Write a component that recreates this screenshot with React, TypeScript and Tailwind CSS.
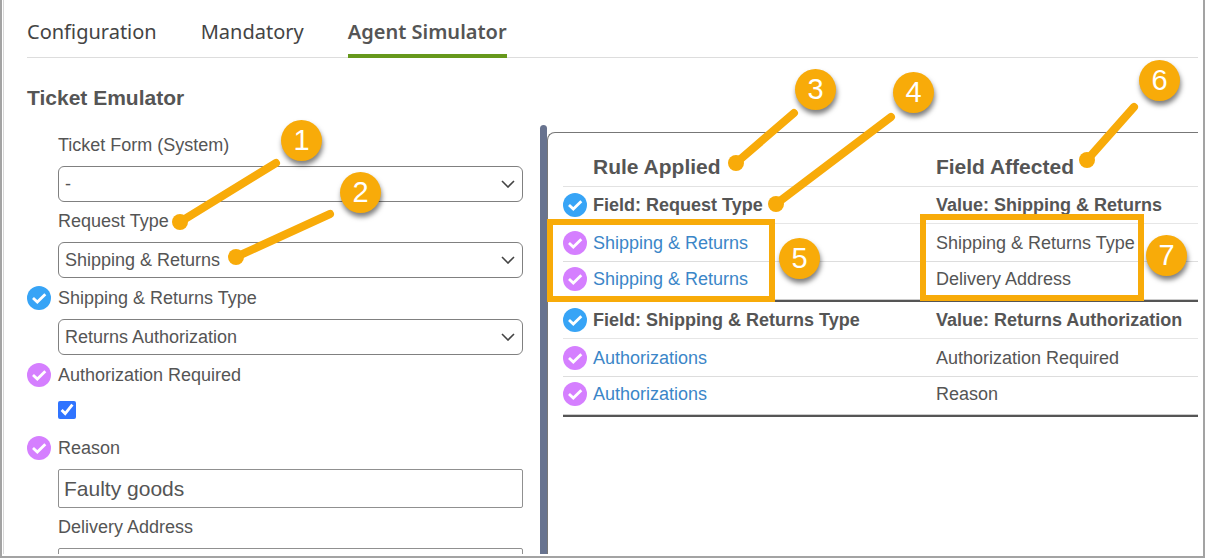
import { useState } from "react";
import type { ReactNode } from "react";

type Tone = "blue" | "purple";

const tabs = ["Configuration", "Mandatory", "Agent Simulator"];

const groups = [
  {
    field: "Field: Request Type",
    value: "Value: Shipping & Returns",
    rules: [
      { name: "Shipping & Returns", affected: "Shipping & Returns Type" },
      { name: "Shipping & Returns", affected: "Delivery Address" },
    ],
  },
  {
    field: "Field: Shipping & Returns Type",
    value: "Value: Returns Authorization",
    rules: [
      { name: "Authorizations", affected: "Authorization Required" },
      { name: "Authorizations", affected: "Reason" },
    ],
  },
];

// pointer lines, from the dot to the end next to the number
const pointers = [
  { x1: 180, y1: 222, x2: 276, y2: 163 },
  { x1: 236, y1: 257, x2: 330, y2: 214 },
  { x1: 736, y1: 163, x2: 794, y2: 113 },
  { x1: 776, y1: 204, x2: 891, y2: 117 },
  { x1: 1087, y1: 160, x2: 1134, y2: 107 },
];

const Check = ({ tone }: { tone: Tone }) => (
  <svg viewBox="0 0 24 24" className="block size-6 shrink-0" aria-hidden="true">
    <circle cx="12" cy="12" r="12" fill={tone === "blue" ? "#37a4f6" : "#d57fff"} />
    <path d="M6 12l4.3 4 8-7.8" fill="none" stroke="#fff" strokeWidth="2.8" />
  </svg>
);

const FieldLabel = ({ id, tone, children }: { id: string; tone?: Tone; children: ReactNode }) => (
  <div className={tone ? "flex h-[41px] items-center pb-0.5" : "flex h-10 items-center pb-0.5"}>
    <span className="w-[31px] shrink-0">{tone && <Check tone={tone} />}</span>
    <label htmlFor={id}>{children}</label>
  </div>
);

const SelectBox = ({ id, options }: { id: string; options: string[] }) => (
  <div className="relative ml-[31px]">
    <select
      id={id}
      className="block h-9 w-full appearance-none rounded-md border border-[#808080] bg-white pl-1.5 pr-8 text-[18px] text-[#555]"
    >
      {options.map((o) => (
        <option key={o}>{o}</option>
      ))}
    </select>
    <svg viewBox="0 0 14 8" className="pointer-events-none absolute right-2 top-3.5 h-2 w-3.5" aria-hidden="true">
      <path d="M1 1l6 6 6-6" fill="none" stroke="#444" strokeWidth="1.6" />
    </svg>
  </div>
);

const Marker = ({ n, className }: { n: number; className: string }) => (
  <span
    className={`absolute flex size-[41px] items-center justify-center rounded-full bg-[#f8ab09] text-[29px] leading-none text-white shadow-[1px_4px_5px_rgba(0,0,0,0.5)] ${className}`}
  >
    {n}
  </span>
);

const Callouts = () => (
  <div className="pointer-events-none absolute inset-0 overflow-hidden">
    <div className="absolute left-[547px] top-[219px] h-[83px] w-[228px] border-6 border-[#f8ab09]" />
    <div className="absolute left-[920px] top-[214px] h-[87px] w-[224px] border-6 border-[#f8ab09]" />
    <svg className="absolute left-0 top-0 h-full w-full" aria-hidden="true">
      {pointers.map((p) => (
        <g key={p.x1} fill="#f8ab09" stroke="#f8ab09">
          <line {...p} strokeWidth="8" strokeLinecap="round" />
          <circle cx={p.x1} cy={p.y1} r="8" stroke="none" />
        </g>
      ))}
    </svg>
    <Marker n={1} className="left-[281px] top-[120px]" />
    <Marker n={2} className="left-[340px] top-[172px]" />
    <Marker n={3} className="left-[795px] top-[69px]" />
    <Marker n={4} className="left-[893px] top-[72px]" />
    <Marker n={5} className="left-[779px] top-[238px]" />
    <Marker n={6} className="left-[1139px] top-[60px]" />
    <Marker n={7} className="left-[1146px] top-[235px]" />
  </div>
);

const App = () => {
  const [active, setActive] = useState("Agent Simulator");
  const [required, setRequired] = useState(true);
  const [reason, setReason] = useState("Faulty goods");

  return (
    <div className="relative h-screen overflow-hidden bg-white font-['Liberation_Sans',Arial,sans-serif] text-[18px] leading-6 text-[#555]">
      <div className="flex h-full flex-col border-x-2 border-b-2 border-[#a3a3a3] pb-0.5 pl-px">
        <div className="flex min-h-0 flex-1 flex-col overflow-hidden border-l border-[#d8d8d8] pl-[23px] pr-[5px]">
          <nav className="flex h-[58px] shrink-0 items-stretch gap-11 border-b border-[#ddd] font-['Noto_Sans',sans-serif] text-[20px]">
            {tabs.map((tab) => (
              <button
                key={tab}
                onClick={() => setActive(tab)}
                className={
                  tab === active
                    ? "-mb-px border-b-4 border-[#66981c] pt-2.5 font-semibold"
                    : "-mb-px border-b-4 border-transparent pt-2.5 text-[#444]"
                }
              >
                {tab}
              </button>
            ))}
          </nav>

          <div className="grid min-h-0 flex-1 grid-cols-[513fr_658fr]">
            <form className="min-w-0 pr-[17px]">
              <h2 className="flex h-[68px] items-center pt-3 text-[21px] font-bold">Ticket Emulator</h2>
              <FieldLabel id="form">Ticket Form (System)</FieldLabel>
              <SelectBox id="form" options={["-"]} />
              <FieldLabel id="requestType">Request Type</FieldLabel>
              <SelectBox id="requestType" options={["Shipping & Returns"]} />
              <FieldLabel id="returnsType" tone="blue">Shipping & Returns Type</FieldLabel>
              <SelectBox id="returnsType" options={["Returns Authorization"]} />
              <FieldLabel id="authRequired" tone="purple">Authorization Required</FieldLabel>
              <div className="ml-[31px] flex h-8 items-center pb-1">
                <input
                  id="authRequired"
                  type="checkbox"
                  checked={required}
                  onChange={(e) => setRequired(e.target.checked)}
                  className="size-[18px] accent-[#3074ff]"
                />
              </div>
              <FieldLabel id="reason" tone="purple">Reason</FieldLabel>
              <div className="ml-[31px]">
                <input
                  id="reason"
                  value={reason}
                  onChange={(e) => setReason(e.target.value)}
                  className="block h-[39px] w-full rounded-xs border border-[#909090] px-[5px] text-[21px]"
                />
              </div>
              <FieldLabel id="address">Delivery Address</FieldLabel>
              <div className="ml-[31px]">
                <input id="address" className="block h-[39px] w-full rounded-xs border border-[#909090] px-[5px] text-[21px]" />
              </div>
            </form>

            <div className="flex min-w-0 pt-[67px]">
              <div className="w-[7px] shrink-0 rounded-t-full bg-[#68738f]" />
              <div className="mt-[7px] min-w-0 flex-1 rounded-tl-lg border-l border-t border-[#777] pl-[15px]">
                <table className="w-full table-fixed border-separate border-spacing-0 text-left">
                  <thead>
                    <tr className="h-[54px] text-[21px] *:border-b *:border-[#e2e2e2]">
                      <th className="w-[30px]" aria-label="Status" />
                      <th className="w-[54%] pt-3.5 font-bold">Rule Applied</th>
                      <th className="pt-3.5 font-bold">Field Affected</th>
                    </tr>
                  </thead>
                  {groups.map((g) => (
                    <tbody key={g.field}>
                      <tr className="h-[37px] font-bold *:border-b *:border-[#e6e6e6]">
                        <td><Check tone="blue" /></td>
                        <td>{g.field}</td>
                        <td>{g.value}</td>
                      </tr>
                      {g.rules.map((r, i) => (
                        <tr
                          key={r.affected}
                          className={
                            i === g.rules.length - 1
                              ? "h-10 *:border-b-2 *:border-[#555] *:pb-1 *:shadow-[inset_0_-1px_#ccc]"
                              : "h-[38px] *:border-b *:border-[#ddd]"
                          }
                        >
                          <td><Check tone="purple" /></td>
                          <td><a href="#" className="text-[#3b86c8]">{r.name}</a></td>
                          <td className="whitespace-nowrap">{r.affected}</td>
                        </tr>
                      ))}
                    </tbody>
                  ))}
                </table>
              </div>
            </div>
          </div>
        </div>
      </div>
      <Callouts />
    </div>
  );
};

export default App;
